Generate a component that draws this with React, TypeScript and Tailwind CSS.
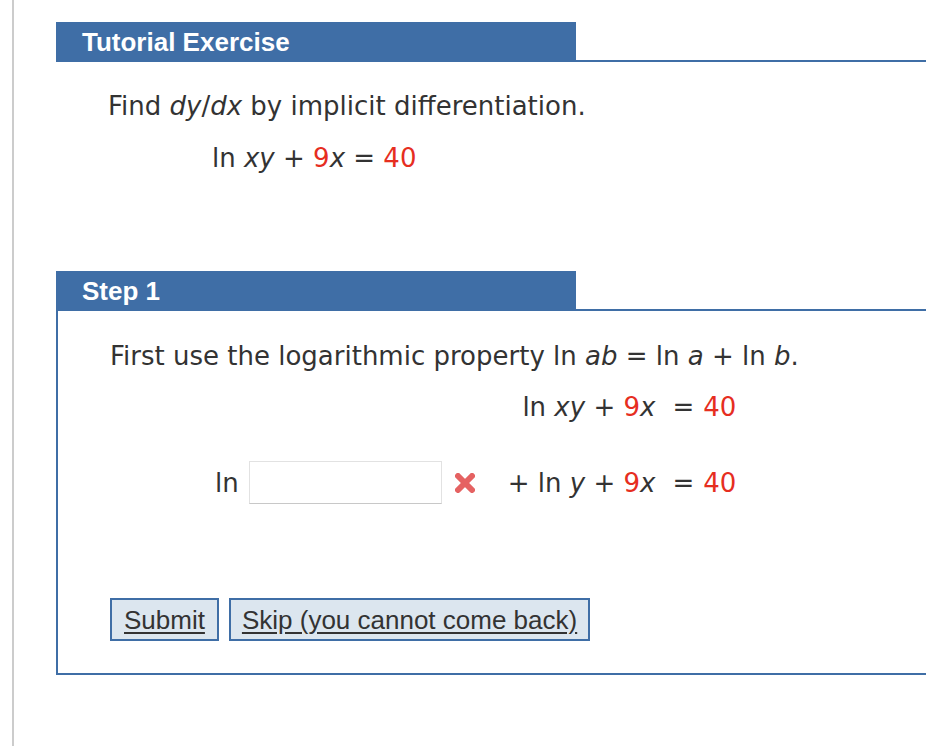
import React from 'react';

const BLUE = 'bg-[#3f6ea6]';

const Red = ({ children }: { children: React.ReactNode }) => (
  <span className="text-[#e62e1f]">{children}</span>
);

const I = ({ children }: { children: React.ReactNode }) => <i className="italic">{children}</i>;

const SectionHeader = ({ title }: { title: string }) => (
  <div className="flex">
    <div className={`${BLUE} w-[520px] h-[40px] flex items-center pl-[26px] shrink-0`}>
      <span className="font-['Liberation_Sans',Arial,sans-serif] font-bold text-[26px] leading-none text-white">
        {title}
      </span>
    </div>
    <div className="flex-1 self-end h-[2px] bg-[#3f6ea6]" />
  </div>
);

const WrongMark = () => (
  <svg width="26" height="26" viewBox="0 0 26 26" className="shrink-0 block">
    <g stroke="#e45a5a" strokeWidth="6" strokeLinecap="round" opacity="0.95">
      <line x1="6" y1="6" x2="20" y2="20" />
      <line x1="20" y1="6" x2="6" y2="20" />
    </g>
  </svg>
);

export default function App() {
  return (
    <div className="min-h-screen bg-white pl-[12px] font-['DejaVu_Sans',Verdana,sans-serif] text-[#333]">
      <div className="min-h-screen border-l-2 border-[#cccccc] pl-[42px] pt-[22px]">
        {/* Tutorial Exercise */}
        <SectionHeader title="Tutorial Exercise" />
        <div className="pl-[52px] pt-[29px] text-[26px] leading-[30px]">
          <p>
            Find <I>dy</I>/<I>dx</I> by implicit differentiation.
          </p>
          <p className="mt-[22px] ml-[104px]">
            ln <I>xy</I> + <Red>9</Red>
            <I>x</I> = <Red>40</Red>
          </p>
        </div>

        {/* Step 1 */}
        <div className="mt-[98px]">
          <SectionHeader title="Step 1" />
          <div className="border-l-2 border-b-2 border-[#3f6ea6] pl-[52px] pt-[30px] pb-[32px] text-[26px] leading-[30px]">
            <p>
              First use the logarithmic property ln <I>ab</I> = ln <I>a</I> + ln <I>b</I>.
            </p>
            <div className="mt-[14px] ml-[105px] w-fit whitespace-nowrap grid grid-cols-[auto_auto_auto] grid-rows-[43px_43px] gap-y-[33px] items-center">
              <div className="text-right">
                ln <I>xy</I> + <Red>9</Red>
                <I>x</I>
              </div>
              <div className="pl-[17px] pr-[9px]">=</div>
              <div>
                <Red>40</Red>
              </div>

              <div className="flex items-center justify-end">
                <span>ln</span>
                <input
                  type="text"
                  className="ml-[10px] w-[193px] h-[43px] border border-[#e2e2e2] border-b-[#c8c8c8] bg-white outline-none"
                />
                <span className="ml-[10px]">
                  <WrongMark />
                </span>
                <span className="ml-[30px]">
                  + ln <I>y</I> + <Red>9</Red>
                  <I>x</I>
                </span>
              </div>
              <div className="pl-[17px] pr-[9px]">=</div>
              <div>
                <Red>40</Red>
              </div>
            </div>

            <div className="mt-[94px] flex gap-[10px] font-['Liberation_Sans',Arial,sans-serif] text-[26px] leading-none">
              <button className="h-[43px] px-[12px] border-2 border-[#3f6ea6] bg-[#dce6ef] text-[#333] underline underline-offset-[3px]">
                Submit
              </button>
              <button className="h-[43px] px-[11px] border-2 border-[#3f6ea6] bg-[#dce6ef] text-[#333] underline underline-offset-[3px]">
                Skip (you cannot come back)
              </button>
            </div>
          </div>
        </div>
      </div>
    </div>
  );
}
